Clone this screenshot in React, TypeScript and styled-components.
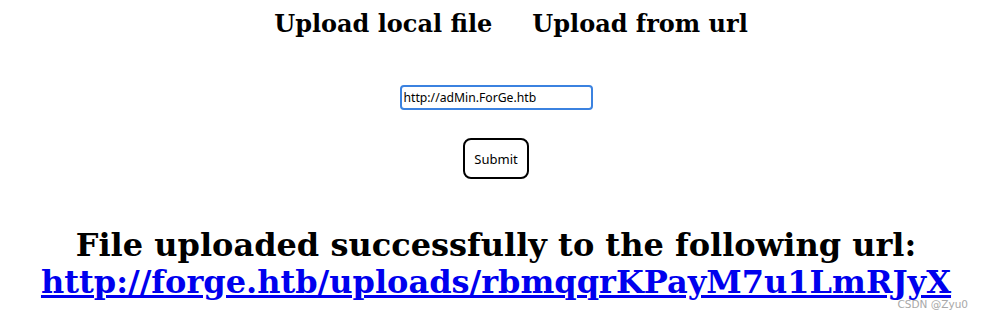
import { FC } from 'react';
import styled, { createGlobalStyle } from 'styled-components';

const GlobalStyle = createGlobalStyle`
  html, body {
    margin: 0;
    padding: 0;
    background: #ffffff;
  }
  body {
    font-family: "DejaVu Serif", serif;
    color: #000;
  }
`;

const Page = styled.div`
  width: 983px;
  height: 319px;
  position: relative;
  overflow: hidden;
  display: flex;
  flex-direction: column;
  align-items: center;
  padding-left: 9px;
  box-sizing: border-box;
`;

const Nav = styled.nav`
  display: flex;
  gap: 40px;
  margin-top: 9px;
  padding-left: 30px;
`;

const NavItem = styled.h2`
  margin: 0;
  font-family: "DejaVu Serif", serif;
  font-weight: bold;
  font-size: 24px;
  line-height: 30px;
`;

const UploadForm = styled.form`
  display: flex;
  flex-direction: column;
  align-items: center;
  margin-top: 46px;
  gap: 28px;
`;

const UrlInput = styled.input`
  width: 193px;
  height: 25px;
  box-sizing: border-box;
  border: 2px solid #3b82e0;
  border-radius: 4px;
  padding: 0 2px;
  font-family: "Noto Sans", "Open Sans", sans-serif;
  font-size: 12.2px;
  color: #000;
  caret-color: #000;
  outline: none;
`;

const SubmitButton = styled.button`
  width: 66px;
  height: 41px;
  box-sizing: border-box;
  background: #fff;
  border: 2px solid #000;
  border-radius: 8px;
  font-family: "Noto Sans", "Open Sans", sans-serif;
  font-size: 13px;
  color: #000;
`;

const Result = styled.h1`
  margin: 48px 0 0;
  font-family: "DejaVu Serif", serif;
  font-weight: bold;
  font-size: 32px;
  line-height: 37px;
  text-align: center;
`;

const ResultLink = styled.a`
  color: #0000ee;
  text-decoration: underline;
`;

const Watermark = styled.span`
  position: absolute;
  right: 15px;
  bottom: 9px;
  font-family: "DejaVu Sans", sans-serif;
  font-size: 10.5px;
  color: #a8a8a8;
`;

const App: FC = () => {
  return (
    <>
      <GlobalStyle />
      <Page>
        <Nav>
          <NavItem>Upload local file</NavItem>
          <NavItem>Upload from url</NavItem>
        </Nav>
        <UploadForm onSubmit={(e) => e.preventDefault()}>
          <UrlInput type="text" defaultValue="http://adMin.ForGe.htb" autoFocus />
          <SubmitButton type="submit">Submit</SubmitButton>
        </UploadForm>
        <Result>
          File uploaded successfully to the following url:
          <br />
          <ResultLink href="#">http://forge.htb/uploads/rbmqqrKPayM7u1LmRJyX</ResultLink>
        </Result>
        <Watermark>CSDN @Zyu0</Watermark>
      </Page>
    </>
  );
};

export default App;
